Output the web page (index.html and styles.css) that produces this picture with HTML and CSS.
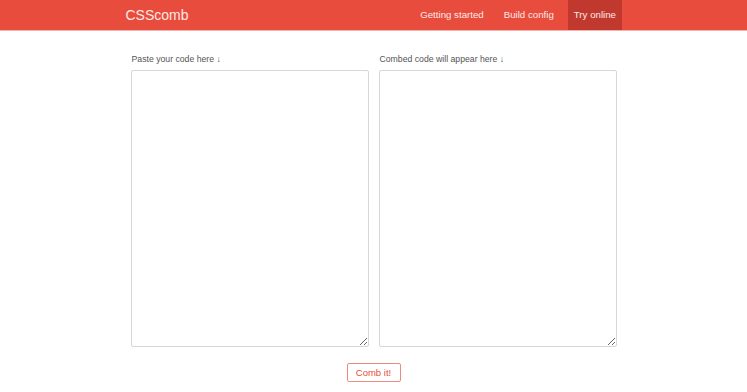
FILE: index.html
```html
<!DOCTYPE html>
<html>
<head>
<meta charset="utf-8">
<link rel="stylesheet" href="styles.css">
</head>
<body>
<header class="topbar">
  <div class="topbar-inner">
    <a class="brand">CSScomb</a>
    <nav class="nav">
      <a class="nav-item">Getting started</a>
      <a class="nav-item">Build config</a>
      <a class="nav-item active">Try online</a>
    </nav>
  </div>
</header>
<main class="main">
  <div class="panes">
    <div class="pane">
      <label class="pane-label">Paste your code here ↓</label>
      <textarea class="code"></textarea>
    </div>
    <div class="pane">
      <label class="pane-label">Combed code will appear here ↓</label>
      <textarea class="code"></textarea>
    </div>
  </div>
  <div class="actions">
    <button class="btn">Comb it!</button>
  </div>
</main>
</body>
</html>
```
FILE: styles.css
```css
* { box-sizing: border-box; }
html, body { margin: 0; padding: 0; background: #fff; }
body { font-family: "Liberation Sans", Arial, sans-serif; color: #555; }

.topbar {
  background: #e84c3d;
  height: 31px;
  border-bottom: 1px solid #f2b3ad;
}
.topbar-inner {
  width: 496px;
  margin: 0 auto;
  display: flex;
  align-items: stretch;
  justify-content: space-between;
  height: 30px;
}
.brand {
  color: #fde9e6;
  font-size: 14px;
  line-height: 30px;
}
.nav {
  display: flex;
  align-items: stretch;
}
.nav-item {
  color: #fde9e6;
  font-size: 9.7px;
  line-height: 30px;
  padding: 0 5.5px;
  margin-left: 9px;
}
.nav-item.active {
  background: #c1392e;
}

.main {
  width: 486px;
  margin: 0 auto;
  padding-top: 22px;
}
.panes {
  display: flex;
  gap: 10px;
}
.pane {
  flex: 1;
  display: flex;
  flex-direction: column;
}
.pane-label {
  font-size: 8.7px;
  color: #555;
  line-height: 12px;
  margin-bottom: 5px;
  padding-left: 1px;
}
.code {
  height: 277px;
  border: 1px solid #d6d6d6;
  border-radius: 2px;
  resize: vertical;
  margin: 0;
  width: 100%;
}
.actions {
  display: flex;
  justify-content: center;
  padding-top: 16px;
}
.btn {
  font-family: "Liberation Sans", Arial, sans-serif;
  font-size: 9.5px;
  color: #e84c3d;
  background: #fff;
  border: 1px solid #ef8a80;
  border-radius: 2px;
  height: 19px;
  width: 54px;
  padding: 0;
}
```
